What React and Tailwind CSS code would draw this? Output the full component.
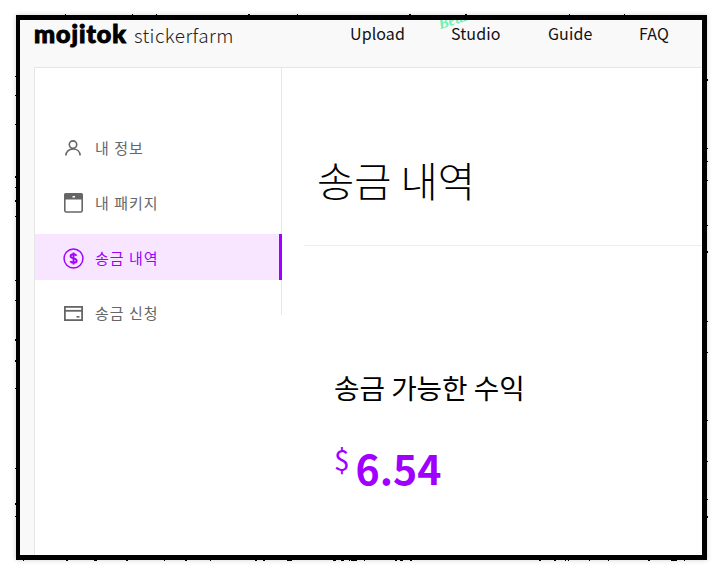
const cjk = 'font-["Noto_Sans_CJK_KR","Noto_Sans",sans-serif]'

function UserIcon() {
    return (
        <svg className="ml-[1px]" width="16" height="16" viewBox="0 0 18 18" fill="none" stroke="#666" strokeWidth="1.800">
            <circle cx="9" cy="5.200" r="4.200" />
            <path d="M1 17.500c0-4.400 3.400-7.300 8-7.300s8 2.900 8 7.300" />
        </svg>
    )
}

function PackageIcon() {
    return (
        <svg width="19" height="20" viewBox="0 0 19 20" fill="none">
            <rect x=".8" y="1" width="17.400" height="18" rx="1.500" stroke="#666" strokeWidth="1.600" />
            <path d="M0 2a2 2 0 0 1 2-2h15a2 2 0 0 1 2 2v4.500h-19z" fill="#666" />
            <rect x="8.500" y="3" width="2.500" height="1.500" fill="#fff" />
        </svg>
    )
}

function DollarIcon() {
    return (
        <svg className="-ml-[1px]" width="21" height="21" viewBox="0 0 20 20" fill="none" stroke="#a000ff">
            <circle cx="10" cy="10" r="9" strokeWidth="1.400" />
            <path d="M12.800 7.400c-.5-1-1.500-1.500-2.800-1.500-1.600 0-2.800.8-2.800 2 0 2.700 5.800 1.400 5.800 4.200 0 1.200-1.300 2-3 2-1.400 0-2.500-.6-3-1.600M10 4.300v11.400" strokeWidth="1.800" />
        </svg>
    )
}

function WalletIcon() {
    return (
        <svg width="19" height="15" viewBox="0 0 19 15" fill="none">
            <rect x=".9" y=".9" width="17.200" height="13.200" stroke="#666" strokeWidth="1.800" />
            <path d="M1 4.800h17" stroke="#666" strokeWidth="1.800" />
            <rect x="12.500" y="10" width="3" height="1.600" fill="#666" />
        </svg>
    )
}

const menu = [
    { label: '내 정보', icon: <UserIcon />, h: 'h-[46px] mb-[9px]' },
    { label: '내 패키지', icon: <PackageIcon />, h: 'h-[46px] mb-[9px]' },
    { label: '송금 내역', icon: <DollarIcon />, h: 'h-[46px] mb-[9px]', active: true },
    { label: '송금 신청', icon: <WalletIcon />, h: 'h-[46px]' },
]

export default function App() {
    return (
        <div className={`w-[722px] h-[575px] bg-white pl-[16px] pt-[15px] overflow-hidden ${cjk}`}>
            <svg width="0" height="0" className="absolute">
                <filter id="rough" x="-2%" y="-2%" width="104%" height="104%" colorInterpolationFilters="sRGB">
                    <feTurbulence type="fractalNoise" baseFrequency="0.25" numOctaves="2" seed="3" />
                    <feDisplacementMap in="SourceGraphic" scale="2.500" xChannelSelector="R" yChannelSelector="G" />
                    <feGaussianBlur stdDeviation="0.4" />
                </filter>
            </svg>
            <div className="relative w-[691px] h-[545px] border-[5px] border-l-4 border-black bg-black shadow-[0_0_5px_rgba(0,0,0,0.18)]">
                <div className="absolute -top-[5px] -bottom-[5px] -left-[4px] -right-[5px] border-[3px] border-black rounded-[3px] pointer-events-none [filter:url(#rough)]" />
                <div className="relative h-full bg-[#f9f9f9] overflow-hidden flex flex-col">
                    <header className="relative h-[47px] shrink-0 flex items-start">
                        <div className="pl-[14px] pt-[1px] flex items-baseline">
                            <span className='font-["Lato",sans-serif] font-black text-[25px] leading-[24px] tracking-[1px] text-black [-webkit-text-stroke:1px_black]'>mojitok</span>
                            <span className="ml-[7px] text-[19px] leading-[24px] font-light text-[#222] tracking-[0.4px]">stickerfarm</span>
                        </div>
                        <nav className="absolute left-[330px] top-0 flex text-[16px] leading-[24px] tracking-[0.1px] text-[#111]">
                            <span className="w-[101px] pt-[1px]">Upload</span>
                            <span className="relative w-[97px] pt-[1px]">
                                <span className='absolute left-[-13px] top-[-12px] -rotate-[18deg] font-["Liberation_Serif",serif] italic font-bold text-[15px] text-[#6ff0ae]'>Beta</span>
                                Studio
                            </span>
                            <span className="w-[91px] pt-[1px]">Guide</span>
                            <span className="pt-[1px]">FAQ</span>
                        </nav>
                    </header>
                    <div className="flex-1 ml-[14px] flex bg-white border-l border-t border-[#e6e6e6]">
                        <aside className="w-[247px] h-[247px] shrink-0 border-r border-[#e6e6e6] pt-[56px]">
                            {menu.map((item) => (
                                <div
                                    key={item.label}
                                    className={`${item.h} flex items-center pt-[2px] text-[15px] ${item.active ? 'bg-[#f8e5ff] text-[#a000ff] border-r-[3px] border-[#a000ff] w-[247px]' : 'text-[#666]'}`}
                                >
                                    <span className="w-[60px] pl-[29px] flex justify-start">{item.icon}</span>
                                    <span className="tracking-[1px]">{item.label}</span>
                                </div>
                            ))}
                        </aside>
                        <main className="flex-1 pl-[22px]">
                            <h1 className="h-[178px] pt-[80px] pl-[13px] border-b border-[#ececec] text-[40.500px] leading-[64px] font-light text-black">송금 내역</h1>
                            <div className="pl-[30px] pt-[122px]">
                                <h2 className="text-[27.700px] leading-[38px] text-black">송금 가능한 수익</h2>
                                <p className="mt-[33px] flex items-start text-[#a000ff]">
                                    <span className="text-[28px] leading-[40px]">$</span>
                                    <span className="ml-[6px] text-[41px] leading-[56px] font-bold">6.54</span>
                                </p>
                            </div>
                        </main>
                    </div>
                </div>
            </div>
        </div>
    )
}
